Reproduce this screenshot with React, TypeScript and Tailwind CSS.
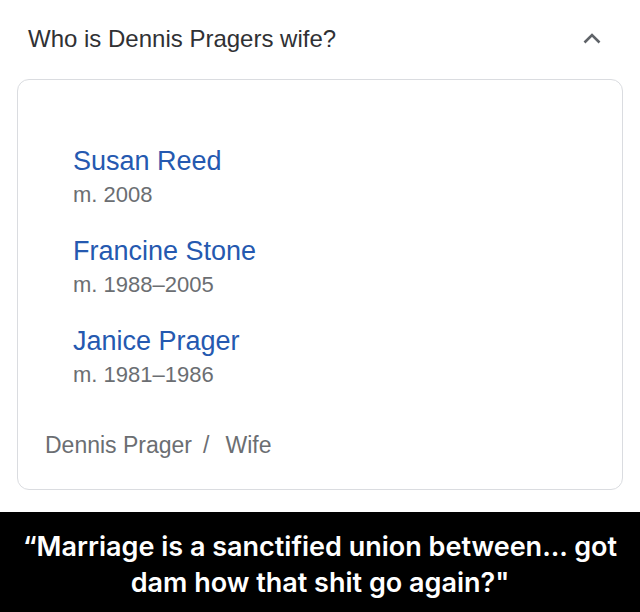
import React from "react";

const spouses = [
  { name: "Susan Reed", years: "m. 2008" },
  { name: "Francine Stone", years: "m. 1988–2005" },
  { name: "Janice Prager", years: "m. 1981–1986" },
];

function ChevronUp() {
  return (
    <svg width="20" height="12" viewBox="0 0 20 12" fill="none">
      <path d="M2.5 10.5 L10 3 L17.5 10.5" stroke="#5f6368" strokeWidth="2.6" />
    </svg>
  );
}

export default function App() {
  return (
    <div className="w-[640px] h-[612px] bg-white flex flex-col overflow-hidden font-['Liberation_Sans',Arial,sans-serif]">
      <div className="flex justify-between pl-[28px] pr-[38px] pt-[25px] h-[79px] items-start">
        <h1 className="text-[24px] leading-[28px] text-[#303134]">Who is Dennis Pragers wife?</h1>
        <div className="pt-[7px]">
          <ChevronUp />
        </div>
      </div>

      <div className="mx-[17px] h-[411px] border border-[#dadce0] rounded-[12px] pt-[66px] pl-[27px]">
        <div className="flex flex-col gap-[28px] pl-[28px]">
          {spouses.map((s) => (
            <div key={s.name} className="flex flex-col gap-[6px]">
              <div className="text-[27px] leading-[30px] text-[#2559b0]">{s.name}</div>
              <div className="text-[22px] leading-[26px] text-[#6b6e72]">{s.years}</div>
            </div>
          ))}
        </div>
        <div className="mt-[43px] text-[23px] leading-[28px] text-[#6b6e72]">
          Dennis Prager<span className="ml-[11px] mr-[16px]">/</span>Wife
        </div>
      </div>

      <div className="mt-[22px] flex-1 bg-black flex flex-col items-center pt-[17px]">
        <p className="text-white text-center font-['Inter',sans-serif] font-semibold text-[27px] leading-[36px]">
          “Marriage is a sanctified union between... got
          <br />
          dam how that shit go again?"
        </p>
      </div>
    </div>
  );
}
